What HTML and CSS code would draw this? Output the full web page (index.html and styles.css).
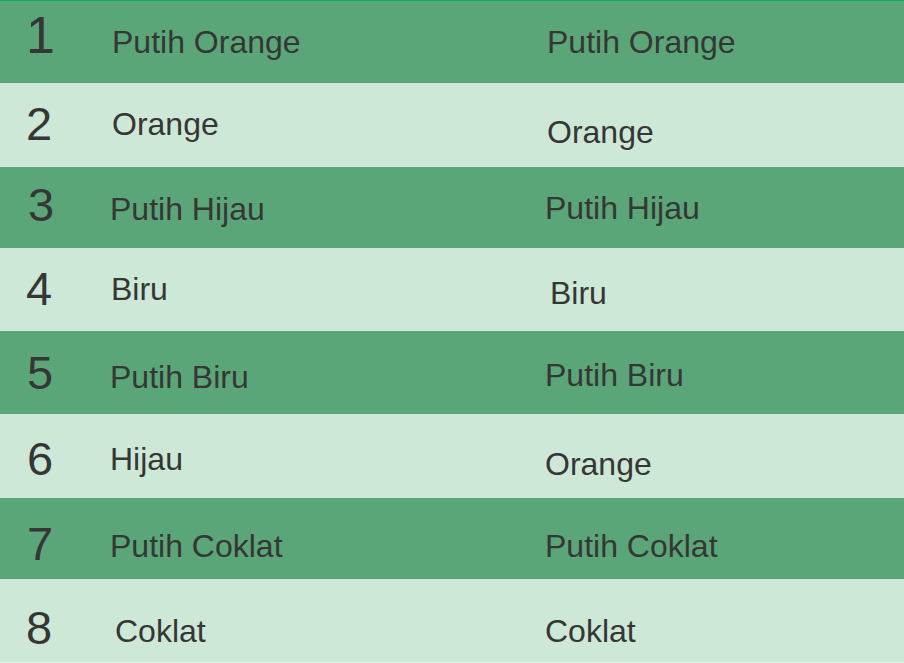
FILE: index.html
```html
<!DOCTYPE html>
<html lang="id">
<head>
<meta charset="utf-8">
<title>Tabel Warna</title>
<link rel="stylesheet" href="styles.css">
</head>
<body>
<div class="table">
  <div class="row dark r1"><div class="num big">1</div><div class="c2">Putih Orange</div><div class="c3">Putih Orange</div></div>
  <div class="row light r2"><div class="num">2</div><div class="c2">Orange</div><div class="c3">Orange</div></div>
  <div class="row dark r3"><div class="num">3</div><div class="c2">Putih Hijau</div><div class="c3">Putih Hijau</div></div>
  <div class="row light r4"><div class="num">4</div><div class="c2">Biru</div><div class="c3">Biru</div></div>
  <div class="row dark r5"><div class="num">5</div><div class="c2">Putih Biru</div><div class="c3">Putih Biru</div></div>
  <div class="row light r6"><div class="num">6</div><div class="c2">Hijau</div><div class="c3">Orange</div></div>
  <div class="row dark r7"><div class="num">7</div><div class="c2">Putih Coklat</div><div class="c3">Putih Coklat</div></div>
  <div class="row light r8"><div class="num">8</div><div class="c2">Coklat</div><div class="c3">Coklat</div></div>
</div>
</body>
</html>
```
FILE: styles.css
```css
html, body {
  margin: 0;
  padding: 0;
  background: #e6f2ea;
}
body {
  width: 904px;
  height: 663px;
  overflow: hidden;
  font-family: "Liberation Sans", Arial, sans-serif;
  color: #363636;
}
.table {
  border-top: 1px solid #12a964;
  border-bottom: 1px solid #e4f1e8;
  display: flex;
  flex-direction: column;
}
.row {
  display: flex;
  align-items: flex-start;
  padding-left: 26px;
  box-sizing: border-box;
}
.row > div { box-sizing: border-box; }
.dark { background: #5ba679; }
.light { background: #cde8d7; }
.num {
  width: 84px;
  flex: none;
  font-size: 47px;
  line-height: 1;
}
.num.big { font-size: 52px; }
.c2 {
  width: 435px;
  flex: none;
  font-size: 32px;
  line-height: 1;
}
.c3 {
  font-size: 32px;
  line-height: 1;
}

.r1 { height: 82px; }
.r1 .num { padding-top: 8px; }
.r1 .c2 { padding-top: 25px; padding-left: 2px; }
.r1 .c3 { padding-top: 25px; padding-left: 2px; }

.r2 { height: 84px; }
.r2 .num { padding-top: 17px; }
.r2 .c2 { padding-top: 25px; padding-left: 2px; }
.r2 .c3 { padding-top: 33px; padding-left: 2px; }

.r3 { height: 81px; }
.r3 .num { padding-top: 14px; padding-left: 2px; }
.r3 .c2 { padding-top: 26px; padding-left: 0; }
.r3 .c3 { padding-top: 25px; }

.r4 { height: 83px; }
.r4 .num { padding-top: 17px; }
.r4 .c2 { padding-top: 25px; padding-left: 1px; }
.r4 .c3 { padding-top: 29px; padding-left: 5px; }

.r5 { height: 83px; }
.r5 .num { padding-top: 18px; padding-left: 1px; }
.r5 .c2 { padding-top: 30px; }
.r5 .c3 { padding-top: 28px; }

.r6 { height: 84px; }
.r6 .num { padding-top: 21px; padding-left: 1px; }
.r6 .c2 { padding-top: 29px; }
.r6 .c3 { padding-top: 34px; }

.r7 { height: 81px; }
.r7 .num { padding-top: 22px; padding-left: 1px; }
.r7 .c2 { padding-top: 32px; }
.r7 .c3 { padding-top: 32px; }

.r8 { height: 83px; }
.r8 .num { padding-top: 25px; }
.r8 .c2 { padding-top: 36px; padding-left: 5px; }
.r8 .c3 { padding-top: 36px; }
```
